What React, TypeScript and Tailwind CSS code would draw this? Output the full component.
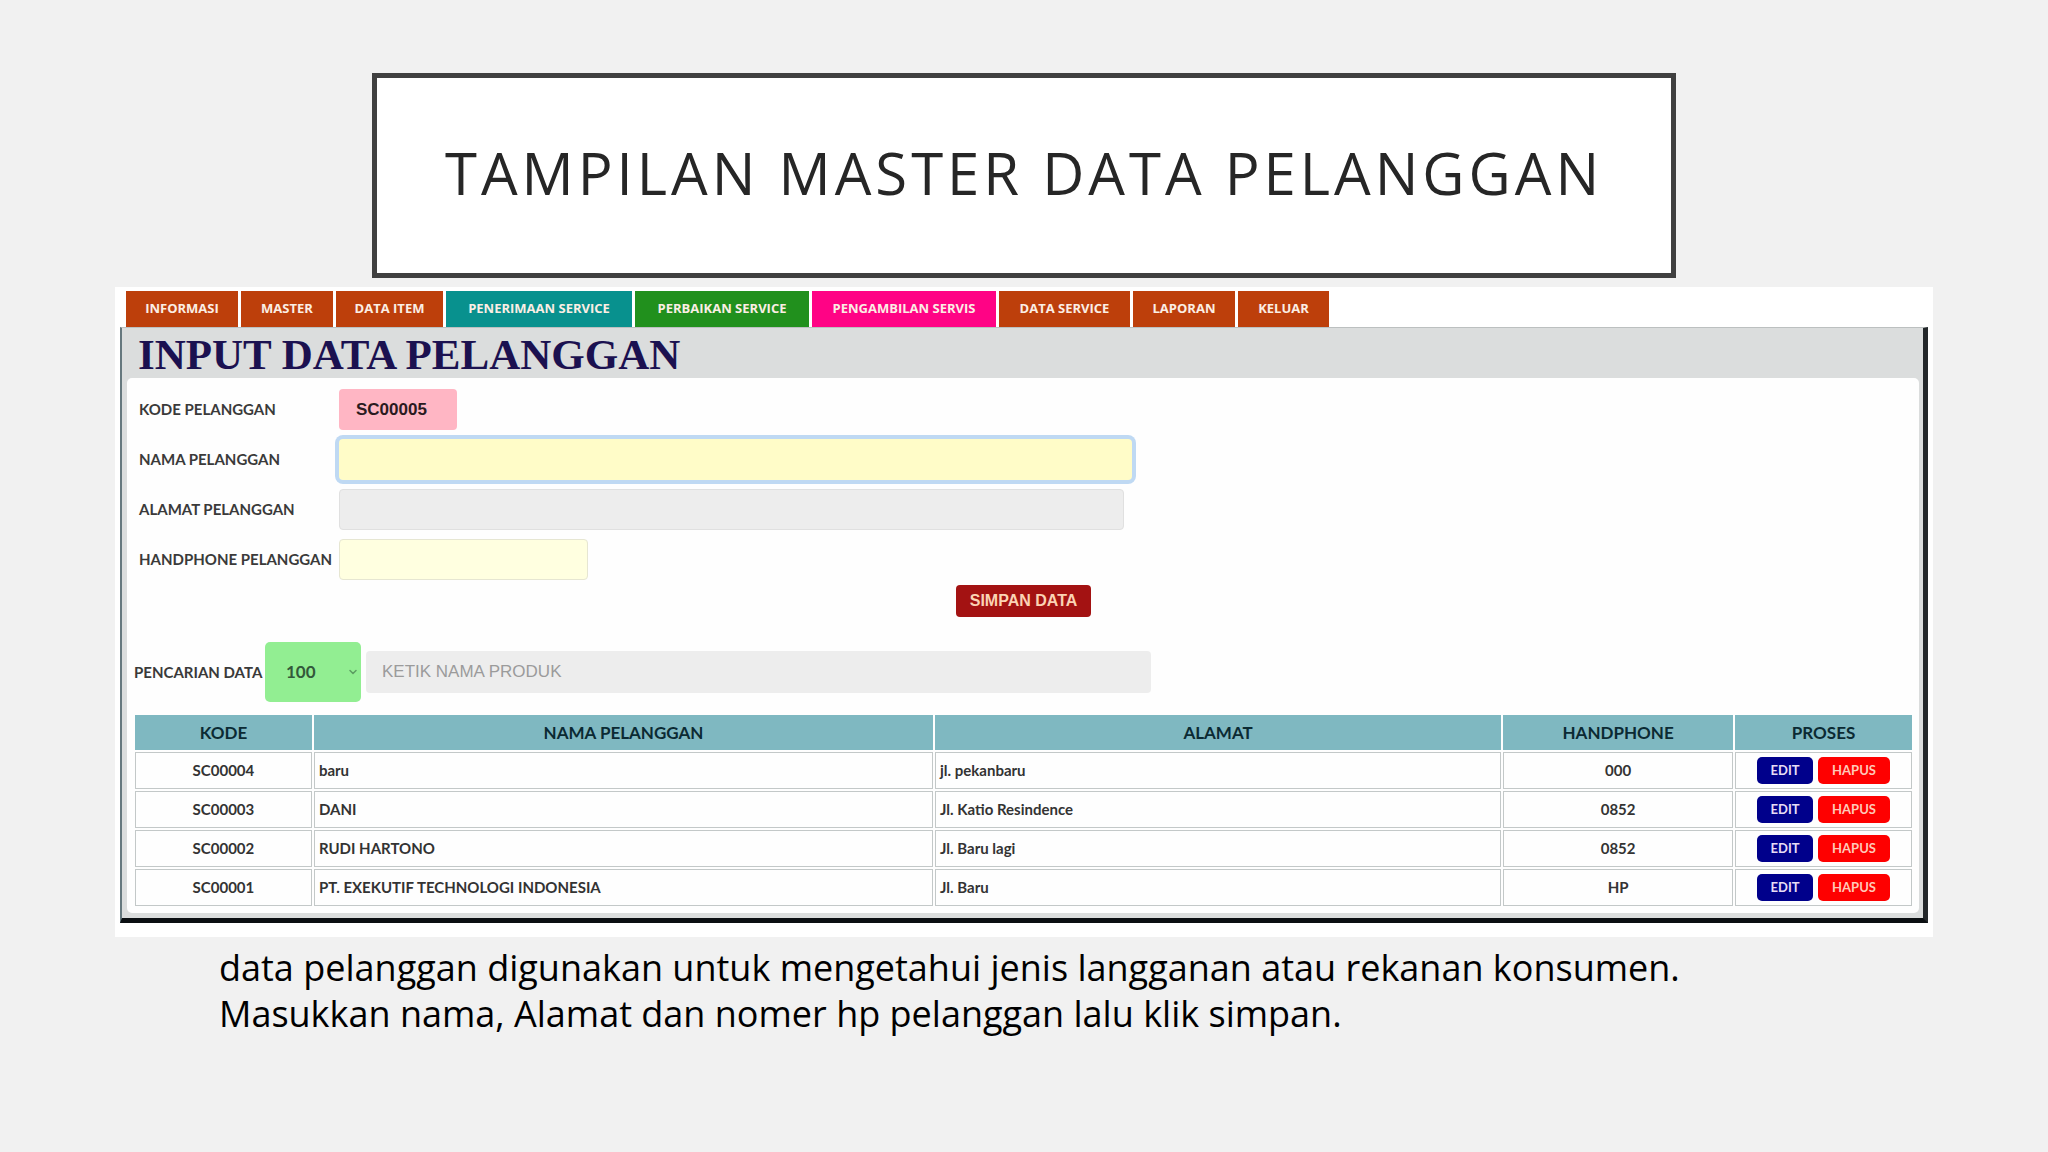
import React from "react";
import { clsx } from "clsx";
import { ChevronDown } from "lucide-react";

interface Tab {
  label: string;
  className: string;
}

interface Customer {
  code: string;
  name: string;
  address: string;
  phone: string;
}

const TABS: Tab[] = [
  { label: "INFORMASI", className: "w-28 bg-[#bd3f0b]" },
  { label: "MASTER", className: "w-[92px] bg-[#bd3f0b]" },
  { label: "DATA ITEM", className: "w-[107px] bg-[#bd3f0b]" },
  { label: "PENERIMAAN SERVICE", className: "w-[186px] bg-[#08918e]" },
  { label: "PERBAIKAN SERVICE", className: "w-[174px] bg-[#21901d]" },
  { label: "PENGAMBILAN SERVIS", className: "w-[184px] bg-[#ff0385]" },
  { label: "DATA SERVICE", className: "w-[131px] bg-[#bd3f0b]" },
  { label: "LAPORAN", className: "w-[102px] bg-[#bd3f0b]" },
  { label: "KELUAR", className: "w-[91px] bg-[#bd3f0b]" },
];

const CUSTOMERS: Customer[] = [
  { code: "SC00004", name: "baru", address: "jl. pekanbaru", phone: "000" },
  { code: "SC00003", name: "DANI", address: "Jl. Katio Resindence", phone: "0852" },
  { code: "SC00002", name: "RUDI HARTONO", address: "Jl. Baru lagi", phone: "0852" },
  {
    code: "SC00001",
    name: "PT. EXEKUTIF TECHNOLOGI INDONESIA",
    address: "Jl. Baru",
    phone: "HP",
  },
];

const NavTabs: React.FC = () => (
  <nav className="ml-[6px] flex gap-[3px] font-['Open_Sans',sans-serif] text-[13px] font-bold text-[#fbeee4]">
    {TABS.map((tab) => (
      <a
        key={tab.label}
        href="#"
        className={clsx(
          "flex h-9 shrink-0 items-center justify-center whitespace-nowrap",
          tab.className,
        )}
      >
        {tab.label}
      </a>
    ))}
  </nav>
);

interface FieldProps {
  id: string;
  label: string;
  className: string;
  defaultValue?: string;
}

const Field: React.FC<FieldProps> = ({ id, label, className, defaultValue }) => (
  <div className="flex items-center">
    <label htmlFor={id} className="w-[200px] shrink-0 whitespace-nowrap">
      {label}
    </label>
    <input
      id={id}
      type="text"
      defaultValue={defaultValue}
      className={clsx(
        "h-[41px] rounded-[4px] px-[17px] font-['Liberation_Sans',sans-serif] text-[17px] font-bold text-[#2a1a20] outline-none",
        className,
      )}
    />
  </div>
);

const CustomerForm: React.FC = () => (
  <form className="px-[11px] pt-[11px]">
    <div className="flex flex-col gap-[9px]">
      <Field
        id="kode"
        label="KODE PELANGGAN"
        defaultValue="SC00005"
        className="w-[118px] bg-[#ffb6c4]"
      />
      <Field
        id="nama"
        label="NAMA PELANGGAN"
        className="w-[793px] bg-[#fffcc8] ring-4 ring-[#bfd9f3]"
      />
      <Field
        id="alamat"
        label="ALAMAT PELANGGAN"
        className="w-[785px] border border-[#e0e0e0] bg-[#ededed]"
      />
      <Field
        id="handphone"
        label="HANDPHONE PELANGGAN"
        className="w-[249px] border border-[#e6e6d2] bg-[#ffffe0]"
      />
    </div>
    <div className="mt-[5px] flex justify-center">
      <button
        type="button"
        className="h-8 rounded-[4px] bg-[#a31212] px-[14px] font-['Liberation_Sans',sans-serif] text-[16px] font-bold text-[#fbd3b4]"
      >
        SIMPAN DATA
      </button>
    </div>
  </form>
);

const SearchBar: React.FC = () => (
  <div className="mt-[25px] flex items-center px-[6px]">
    <label htmlFor="jumlah" className="w-[131px] shrink-0 whitespace-nowrap">
      PENCARIAN DATA
    </label>
    <div className="relative">
      <select
        id="jumlah"
        className="h-[60px] w-24 appearance-none rounded-[5px] bg-[#92ee92] pl-[21px] text-[17px] font-bold text-[#33583a]"
      >
        <option>100</option>
      </select>
      <ChevronDown
        className="pointer-events-none absolute top-6 right-[2px] text-[#5c9c62]"
        size={12}
        strokeWidth={3}
      />
    </div>
    <input
      type="text"
      aria-label="Pencarian"
      placeholder="KETIK NAMA PRODUK"
      className="ml-[5px] h-[42px] w-[785px] rounded-[4px] bg-[#ededed] px-4 font-['Liberation_Sans',sans-serif] text-[17px] font-normal placeholder:text-[#9b9b9b]"
    />
  </div>
);

const CustomerTable: React.FC = () => (
  <div className="px-[5px] pt-[11px] pb-[5px]">
    <table className="w-full table-fixed border-separate border-spacing-[2px] text-[15px] text-[#333]">
      <colgroup>
        <col className="w-[10%]" />
        <col className="w-[35%]" />
        <col className="w-[32%]" />
        <col className="w-[13%]" />
        <col className="w-[10%]" />
      </colgroup>
      <thead>
        <tr className="h-[35px] bg-[#7fb8c1] text-[17px] text-[#0b2a33]">
          <th>KODE</th>
          <th>NAMA PELANGGAN</th>
          <th>ALAMAT</th>
          <th>HANDPHONE</th>
          <th>PROSES</th>
        </tr>
      </thead>
      <tbody>
        {CUSTOMERS.map((customer) => (
          <tr key={customer.code} className="h-[37px] *:border *:border-[#c3c8c8]">
            <td className="text-center">{customer.code}</td>
            <td className="px-1">{customer.name}</td>
            <td className="px-1">{customer.address}</td>
            <td className="text-center">{customer.phone}</td>
            <td>
              <div className="flex justify-center gap-[5px] text-[13px]">
                <button
                  type="button"
                  className="h-[27px] w-14 rounded-[5px] bg-[#00008b] text-[#e6dcf5]"
                >
                  EDIT
                </button>
                <button
                  type="button"
                  className="h-[27px] w-[72px] rounded-[5px] bg-[#fe0000] text-[#ffc9b8]"
                >
                  HAPUS
                </button>
              </div>
            </td>
          </tr>
        ))}
      </tbody>
    </table>
  </div>
);

export default function App() {
  return (
    <main className="flex min-h-screen flex-col bg-[#f1f1f1] pt-[73px]">
      <header className="mx-auto flex h-[205px] w-[1304px] max-w-full items-center justify-center border-[5px] border-[#404040] bg-white pb-[6px]">
        <h1 className="font-['Open_Sans',sans-serif] text-[58px] leading-none tracking-[4px] text-[#262626]">
          TAMPILAN MASTER DATA PELANGGAN
        </h1>
      </header>

      <section className="mx-[115px] mt-[9px] bg-white px-[5px] pt-1 pb-[14px]">
        <NavTabs />
        <div className="border-r-[5px] border-b-[5px] border-l-2 border-t border-t-[#bcc0c0] border-r-[#23272a] border-b-[#0b0f12] border-l-[#66787e] bg-[#dbdddd]">
          <h2 className="h-[50px] pl-4 font-['Liberation_Serif',serif] text-[43px] leading-[54px] font-bold text-[#1b1150]">
            INPUT DATA PELANGGAN
          </h2>
          <div className="mr-1 mb-[5px] ml-[5px] rounded-[5px] bg-[#fefefe] pl-px font-['Lato',sans-serif] text-[15px] font-bold text-[#3a3a3a]">
            <CustomerForm />
            <SearchBar />
            <CustomerTable />
          </div>
        </div>
      </section>

      <p className="px-[219px] pt-2 font-['Open_Sans',sans-serif] text-[36px] leading-[46px] text-black">
        data pelanggan digunakan untuk mengetahui jenis langganan atau rekanan konsumen.
        <br />
        Masukkan nama, Alamat dan nomer hp pelanggan lalu klik simpan.
      </p>
    </main>
  );
}
